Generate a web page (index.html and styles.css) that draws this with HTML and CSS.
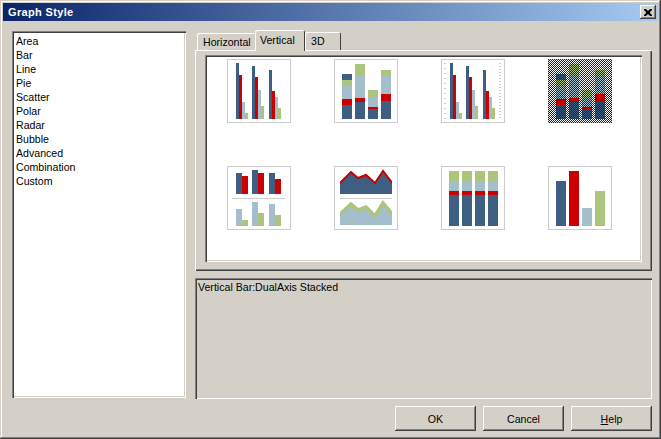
FILE: index.html
```html
<!DOCTYPE html>
<html lang="en">
<head>
<meta charset="utf-8">
<title>Graph Style</title>
<link rel="stylesheet" href="styles.css">
</head>
<body>
<svg class="defs" width="0" height="0" aria-hidden="true">
  <defs>
    <pattern id="check" width="2" height="2" patternUnits="userSpaceOnUse">
      <rect x="0" y="0" width="1" height="1" fill="#0a246a"/>
      <rect x="1" y="1" width="1" height="1" fill="#0a246a"/>
    </pattern>
    <clipPath id="plot"><rect x="6" y="0" width="52" height="64"/></clipPath>
    <g id="clustered">
      <rect class="b" x="9" y="4" width="3" height="56"/><rect class="r" x="12" y="16" width="3" height="44"/><rect class="l" x="15" y="43" width="3" height="17"/><rect class="g" x="18" y="54" width="3" height="6"/>
      <rect class="b" x="25" y="7" width="3" height="53"/><rect class="r" x="28" y="18" width="3" height="42"/><rect class="l" x="31" y="31" width="3" height="29"/><rect class="g" x="34" y="47" width="3" height="13"/>
      <rect class="b" x="42" y="11" width="3" height="49"/><rect class="r" x="45" y="32" width="3" height="28"/><rect class="l" x="48" y="38" width="3" height="22"/><rect class="g" x="51" y="49" width="3" height="11"/>
    </g>
    <g id="stacked">
      <rect class="b" x="8" y="15" width="10" height="6"/><rect class="g" x="8" y="21" width="10" height="6"/><rect class="l" x="8" y="27" width="10" height="13"/><rect class="r" x="8" y="40" width="10" height="6"/><rect class="b" x="8" y="46" width="10" height="14"/>
      <rect class="g" x="21" y="5" width="10" height="11"/><rect class="l" x="21" y="16" width="10" height="23"/><rect class="r" x="21" y="39" width="10" height="4"/><rect class="b" x="21" y="43" width="10" height="17"/>
      <rect class="g" x="34" y="31" width="10" height="7"/><rect class="l" x="34" y="38" width="10" height="10"/><rect class="r" x="34" y="48" width="10" height="2"/><rect class="b" x="34" y="50" width="10" height="10"/>
      <rect class="g" x="47" y="11" width="10" height="6"/><rect class="l" x="47" y="17" width="10" height="18"/><rect class="r" x="47" y="35" width="10" height="7"/><rect class="b" x="47" y="42" width="10" height="18"/>
    </g>
  </defs>
</svg>
<div class="window">
  <div class="titlebar">
    <span class="title">Graph Style</span>
    <button class="close" type="button" aria-label="Close">
      <svg width="8" height="7" viewBox="0 0 8 7"><path d="M0 0h2l2 2 2-2h2v1L6 3v1l2 2v1H6L4 5 2 7H0V6l2-2V3L0 1z" fill="#000"/></svg>
    </button>
  </div>
  <div class="content">
    <ul class="list sunken">
      <li>Area</li><li>Bar</li><li>Line</li><li>Pie</li><li>Scatter</li><li>Polar</li><li>Radar</li><li>Bubble</li><li>Advanced</li><li>Combination</li><li>Custom</li>
    </ul>
    <div class="right">
      <div class="tabs">
        <div class="tab tab-h">Horizontal</div>
        <div class="tab tab-v">Vertical</div>
        <div class="tab tab-3">3D</div>
      </div>
      <div class="pane">
        <div class="canvas sunken">
          <svg class="thumb" viewBox="0 0 64 64"><rect class="frame" x=".5" y=".5" width="63" height="63"/><use href="#clustered"/></svg>
          <svg class="thumb" viewBox="0 0 64 64"><rect class="frame" x=".5" y=".5" width="63" height="63"/><use href="#stacked"/></svg>
          <svg class="thumb" viewBox="0 0 64 64"><rect class="frame" x=".5" y=".5" width="63" height="63"/>
            <path class="ticks" d="M3 4.5h2M3 9.5h2M3 14.5h2M3 19.5h2M3 24.5h2M3 29.5h2M3 34.5h2M3 39.5h2M3 44.5h2M3 49.5h2M3 54.5h2M3 59.5h2M58 4.5h2M58 7.5h2M58 10.5h2M58 13.5h2M58 16.5h2M58 19.5h2M58 22.5h2M58 25.5h2M58 28.5h2M58 31.5h2M58 34.5h2M58 37.5h2M58 40.5h2M58 43.5h2M58 46.5h2M58 49.5h2M58 52.5h2M58 55.5h2M58 58.5h2"/>
            <use href="#clustered"/></svg>
          <svg class="thumb" viewBox="0 0 64 64"><rect class="frame" x=".5" y=".5" width="63" height="63"/><use href="#stacked"/><rect width="64" height="64" fill="url(#check)"/></svg>
          <svg class="thumb" viewBox="0 0 64 64"><rect class="frame" x=".5" y=".5" width="63" height="63"/>
            <rect class="b" x="9" y="7" width="6" height="21"/><rect class="r" x="15" y="10" width="6" height="18"/><rect class="b" x="25" y="4" width="6" height="24"/><rect class="r" x="31" y="7" width="6" height="21"/><rect class="b" x="42" y="7" width="6" height="21"/><rect class="r" x="48" y="13" width="6" height="15"/>
            <rect class="div" x="5" y="32" width="53" height="1"/>
            <rect class="l" x="9" y="43" width="6" height="17"/><rect class="g" x="15" y="54" width="6" height="6"/><rect class="l" x="25" y="36" width="6" height="24"/><rect class="g" x="31" y="47" width="6" height="13"/><rect class="l" x="42" y="38" width="6" height="22"/><rect class="g" x="48" y="49" width="6" height="11"/></svg>
          <svg class="thumb" viewBox="0 0 64 64"><rect class="frame" x=".5" y=".5" width="63" height="63"/>
            <g class="area" clip-path="url(#plot)">
              <polygon class="b" points="6,17 17,5 24,12 32,8 41,17 49,4 58,16 58,28 6,28"/>
              <polyline class="rl" points="5,18 17,6 24,12 32,9 41,17 49,5 59,18"/>
              <polygon class="l" points="6,49 17,37 24,43 32,41 41,51 49,37 58,48 58,59 6,59"/>
              <polyline class="gl" points="5,49 17,38 24,44 32,41 41,50 49,37 59,49"/>
            </g>
            <rect class="div" x="6" y="32" width="52" height="1"/></svg>
          <svg class="thumb" viewBox="0 0 64 64"><rect class="frame" x=".5" y=".5" width="63" height="63"/>
            <rect class="g" x="8" y="5" width="10" height="10"/><rect class="l" x="8" y="15" width="10" height="10"/><rect class="r" x="8" y="25" width="10" height="4"/><rect class="b" x="8" y="29" width="10" height="31"/>
            <rect class="g" x="21" y="5" width="10" height="10"/><rect class="l" x="21" y="15" width="10" height="10"/><rect class="r" x="21" y="25" width="10" height="4"/><rect class="b" x="21" y="29" width="10" height="31"/>
            <rect class="g" x="34" y="5" width="10" height="10"/><rect class="l" x="34" y="15" width="10" height="10"/><rect class="r" x="34" y="25" width="10" height="4"/><rect class="b" x="34" y="29" width="10" height="31"/>
            <rect class="g" x="47" y="5" width="10" height="10"/><rect class="l" x="47" y="15" width="10" height="10"/><rect class="r" x="47" y="25" width="10" height="4"/><rect class="b" x="47" y="29" width="10" height="31"/></svg>
          <svg class="thumb" viewBox="0 0 64 64"><rect class="frame" x=".5" y=".5" width="63" height="63"/>
            <rect class="b" x="8" y="15" width="10" height="45"/><rect class="r" x="21" y="5" width="10" height="55"/><rect class="l" x="34" y="42" width="10" height="18"/><rect class="g" x="47" y="25" width="10" height="35"/></svg>
        </div>
      </div>
      <div class="desc sunken">Vertical Bar:DualAxis Stacked</div>
    </div>
  </div>
  <div class="buttons">
    <button class="btn" type="button">OK</button>
    <button class="btn" type="button">Cancel</button>
    <button class="btn" type="button"><u>H</u>elp</button>
  </div>
</div>
</body>
</html>
```
FILE: styles.css
```css
html, body {
  margin: 0;
  padding: 0;
  background: #d4d0c8;
}
.defs {
  display: block;
  height: 0;
}
.window {
  box-sizing: border-box;
  width: 661px;
  height: 439px;
  padding: 3px;
  background: #d4d0c8;
  font: 10.6px/14px "Liberation Sans", Arial, sans-serif;
  color: #000;
  box-shadow: inset -1px -1px #404040, inset 1px 1px #d4d0c8, inset -2px -2px #808080, inset 2px 2px #fff;
  overflow: hidden;
}
.titlebar {
  display: flex;
  align-items: center;
  justify-content: space-between;
  height: 18px;
  padding: 0 2px 0 5px;
  background: linear-gradient(to right, #0a246a, #a6caf0);
}
.title {
  color: #fff;
  font-size: 11px;
  font-weight: bold;
  letter-spacing: .35px;
}
.close {
  display: flex;
  align-items: center;
  justify-content: center;
  width: 16px;
  height: 14px;
  padding: 0;
  border: 0;
  background: #d4d0c8;
  box-shadow: inset -1px -1px #404040, inset 1px 1px #fff, inset -2px -2px #808080;
}
.content {
  display: flex;
  gap: 9px;
  padding: 9px 0 0 9px;
}
.sunken {
  box-shadow: inset 1px 1px #808080, inset 2px 2px #404040, inset -1px -1px #fff, inset -2px -2px #d4d0c8;
}
.list {
  box-sizing: border-box;
  width: 174px;
  height: 367px;
  margin: 1px 0 0;
  padding: 3px 4px;
  list-style: none;
  background: #fff;
}
.list li {
  height: 14px;
}
.right {
  display: flex;
  flex-direction: column;
  width: 457px;
}
.tabs {
  display: flex;
  align-items: flex-end;
  height: 20px;
  padding-left: 2px;
}
.tab {
  position: relative;
  box-sizing: border-box;
  padding: 2px 0 0 6px;
  border-radius: 2px 2px 0 0;
  background: #d4d0c8;
  box-shadow: inset 1px 1px #fff, inset -1px 0 #404040;
}
.tab-h {
  width: 58px;
  height: 17px;
  box-shadow: inset 1px 1px #fff;
}
.tab-v {
  z-index: 1;
  width: 50px;
  height: 21px;
  margin-bottom: -1px;
  padding: 3px 0 0 5px;
}
.tab-3 {
  width: 36px;
  height: 18px;
}
.pane {
  box-sizing: border-box;
  height: 221px;
  padding: 5px 10px 9px;
  background: #d4d0c8;
  box-shadow: inset 1px 1px #fff, inset -1px -1px #404040, inset -2px -2px #808080;
}
.canvas {
  box-sizing: border-box;
  display: grid;
  grid-template-columns: repeat(4, 64px);
  grid-auto-rows: 64px;
  gap: 43px;
  height: 207px;
  padding: 4px 0 0 22px;
  background: #fff;
}
.thumb {
  display: block;
  width: 64px;
  height: 64px;
  shape-rendering: crispEdges;
}
.area {
  shape-rendering: auto;
}
.frame {
  fill: #fff;
  stroke: #ccc;
  stroke-width: 1;
}
.b { fill: #3f5f82; }
.r { fill: #cc0000; }
.l { fill: #a5becc; }
.g { fill: #adc47c; }
.div { fill: #ccc; }
.ticks {
  fill: none;
  stroke: #ccc;
  stroke-width: 1;
}
.rl {
  fill: none;
  stroke: #cc0000;
  stroke-width: 2;
}
.gl {
  fill: none;
  stroke: #adc47c;
  stroke-width: 3.5;
}
.desc {
  box-sizing: border-box;
  height: 121px;
  margin-top: 7px;
  padding: 2px 3px;
  background: #d4d0c8;
  box-shadow: inset 1px 1px #808080, inset 2px 2px #404040, inset -1px -1px #fff;
}
.buttons {
  display: flex;
  justify-content: flex-end;
  gap: 7px;
  padding: 7px 6px 0 0;
}
.btn {
  width: 81px;
  height: 25px;
  padding: 0;
  border: 0;
  background: #d4d0c8;
  color: #000;
  font: inherit;
  box-shadow: inset -1px -1px #404040, inset 1px 1px #fff, inset -2px -2px #808080;
}
```
